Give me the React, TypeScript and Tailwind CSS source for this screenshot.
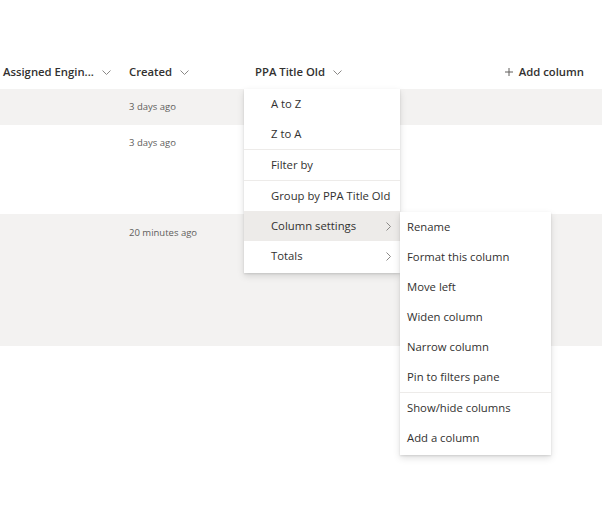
import React from "react";

const font = { fontFamily: '"Open Sans", "Noto Sans", sans-serif' };

function ChevronDown() {
  return (
    <svg width="9" height="5" viewBox="0 0 9 5" className="ml-[8px] mt-[1px]">
      <path d="M0.5 0.5 L4.5 4.5 L8.5 0.5" fill="none" stroke="#8a8886" strokeWidth="1" />
    </svg>
  );
}

function ChevronRight() {
  return (
    <svg width="5" height="9" viewBox="0 0 5 9">
      <path d="M0.5 0.5 L4.5 4.5 L0.5 8.5" fill="none" stroke="#8a8886" strokeWidth="1" />
    </svg>
  );
}

function Plus() {
  return (
    <svg width="8" height="8" viewBox="0 0 8 8" className="mr-[6px]">
      <path d="M4 0 V8 M0 4 H8" fill="none" stroke="#605e5c" strokeWidth="1" />
    </svg>
  );
}

type Item = { label: string; sub?: boolean; active?: boolean; divider?: boolean };

const mainItems: Item[] = [
  { label: "A to Z" },
  { label: "Z to A", divider: true },
  { label: "Filter by", divider: true },
  { label: "Group by PPA Title Old" },
  { label: "Column settings", sub: true, active: true },
  { label: "Totals", sub: true },
];

const subItems: Item[] = [
  { label: "Rename" },
  { label: "Format this column" },
  { label: "Move left" },
  { label: "Widen column" },
  { label: "Narrow column" },
  { label: "Pin to filters pane", divider: true },
  { label: "Show/hide columns" },
  { label: "Add a column" },
];

export default function App() {
  return (
    <div className="relative w-[602px] h-[522px] bg-white text-[#323130]" style={font}>
      <div className="h-[55px]" />
      {/* header */}
      <div className="flex items-center h-[34px] text-[11.3px] font-semibold">
        <div className="w-[129px] pl-[3px] flex items-center">
          Assigned Engin...
          <ChevronDown />
        </div>
        <div className="w-[126px] flex items-center">
          Created
          <ChevronDown />
        </div>
        <div className="flex items-center">
          PPA Title Old
          <ChevronDown />
        </div>
        <div className="ml-auto pr-[18px] flex items-center">
          <Plus />
          Add column
        </div>
      </div>
      {/* rows */}
      <div className="text-[9.5px] text-[#605e5c]">
        <div className="h-[36px] bg-[#f3f2f1] flex items-center pl-[129px]">3 days ago</div>
        <div className="h-[89px] pl-[129px] pt-[11px]">3 days ago</div>
        <div className="h-[132px] bg-[#f3f2f1] pl-[129px] pt-[12px]">20 minutes ago</div>
      </div>

      {/* main menu */}
      <div className="absolute left-[244px] top-[89px] w-[156px] bg-white pb-[2px] text-[11.3px] shadow-[0_3px_7px_rgba(0,0,0,0.13),0_0.6px_1.8px_rgba(0,0,0,0.11)]">
        {mainItems.map((it) => (
          <div key={it.label} className={it.divider ? "border-b border-[#edebe9]" : ""}>
            <div
              className={
                "h-[30px] flex items-center pl-[27px] pr-[9px] " +
                (it.active ? "bg-[#edebe9]" : "")
              }
            >
              <span className="flex-1">{it.label}</span>
              {it.sub && <ChevronRight />}
            </div>
          </div>
        ))}
      </div>

      {/* sub menu */}
      <div className="absolute left-[400px] top-[212px] w-[151px] bg-white pb-[2px] text-[11.3px] shadow-[0_3px_7px_rgba(0,0,0,0.13),0_0.6px_1.8px_rgba(0,0,0,0.11)]">
        {subItems.map((it) => (
          <div key={it.label} className={it.divider ? "border-b border-[#edebe9]" : ""}>
            <div className="h-[30px] flex items-center pl-[7px]">{it.label}</div>
          </div>
        ))}
      </div>
    </div>
  );
}
